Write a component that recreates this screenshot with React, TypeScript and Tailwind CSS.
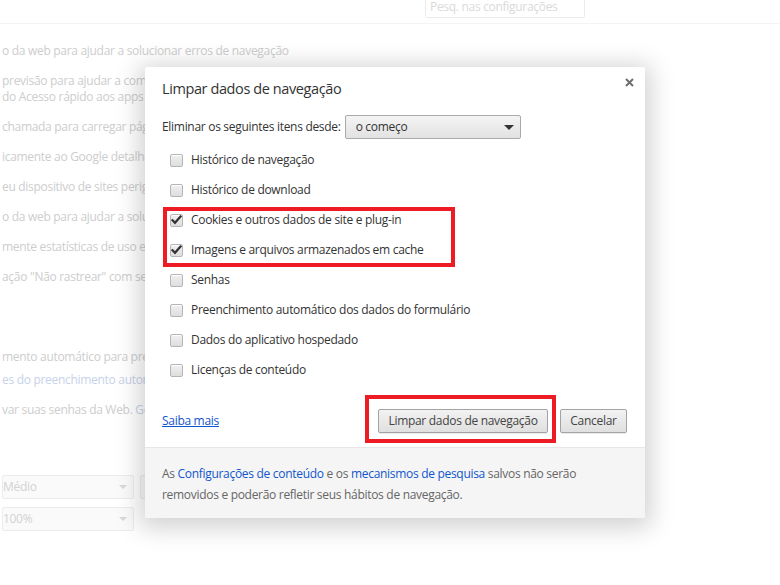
import React from "react";

const FONT = { fontFamily: '"Open Sans", "Noto Sans", Arial, sans-serif' };

const bgRows: { y: string; text: React.ReactNode }[] = [
  { y: "mt-[19px]", text: "o da web para ajudar a solucionar erros de navegação" },
  { y: "mt-[14px]", text: "previsão para ajudar a completar pesquisas e URLs digitados na barra" },
  { y: "mt-0", text: "do Acesso rápido aos apps" },
  { y: "mt-[14px]", text: "chamada para carregar páginas mais rapidamente" },
  { y: "mt-[14px]", text: "icamente ao Google detalhes de possíveis incidentes" },
  { y: "mt-[14px]", text: "eu dispositivo de sites perigosos" },
  { y: "mt-[14px]", text: "o da web para ajudar a solucionar erros de ortografia" },
  { y: "mt-[14px]", text: "mente estatísticas de uso e relatórios de erros" },
  { y: "mt-[14px]", text: "ação \"Não rastrear\" com seu tráfego de navegação" },
];

function Checkbox({ checked }: { checked?: boolean }) {
  return (
    <span className="flex h-[13px] w-[13px] shrink-0 items-center justify-center rounded-[2px] border border-[#b5b5b5] bg-gradient-to-b from-[#f0f0f0] to-[#dedede] shadow-[inset_0_1px_0_#fff]">
      {checked && (
        <svg width="11" height="10" viewBox="0 0 11 10">
          <path d="M1.5 5.2 L4 7.8 L9.5 1.5" fill="none" stroke="#333" strokeWidth="2.2" strokeLinecap="square" />
        </svg>
      )}
    </span>
  );
}

const items: { label: string; checked?: boolean }[] = [
  { label: "Histórico de navegação" },
  { label: "Histórico de download" },
  { label: "Cookies e outros dados de site e plug-in", checked: true },
  { label: "Imagens e arquivos armazenados em cache", checked: true },
  { label: "Senhas" },
  { label: "Preenchimento automático dos dados do formulário" },
  { label: "Dados do aplicativo hospedado" },
  { label: "Licenças de conteúdo" },
];

function ChromeButton({ children, className }: { children: React.ReactNode; className?: string }) {
  return (
    <button
      className={`h-[24px] rounded-[2px] border border-[#a3a3a3] bg-gradient-to-b from-[#f2f2f2] to-[#e0e0e0] text-[12px] text-[#444] shadow-[0_1px_0_rgba(0,0,0,0.08)] ${className ?? ""}`}
    >
      {children}
    </button>
  );
}

export default function App() {
  return (
    <div className="relative h-[585px] w-[780px] overflow-hidden bg-white text-[12px] tracking-[-0.3px]" style={FONT}>
      {/* faded settings page behind the overlay */}
      <div className="flex h-[24px] items-start border-b border-[#f3f3f3]">
        <div className="ml-[425px] h-[18px] w-[160px] rounded-b-[2px] border border-t-0 border-[#ececec] px-[4px] text-[12px] leading-[14px] text-[#dadada]">
          Pesq. nas configurações
        </div>
      </div>
      <div className="pl-[2px] text-[12px] leading-[16px] text-[#cdcdcd]">
        {bgRows.map((r, i) => (
          <div key={i} className={`whitespace-nowrap ${r.y}`}>
            {r.text}
          </div>
        ))}
        <div className="mt-[64px] whitespace-nowrap">mento automático para preencher formulários da Web</div>
        <div className="mt-[7px] whitespace-nowrap text-[#c7d2ea]">es do preenchimento automático</div>
        <div className="mt-[14px] whitespace-nowrap">
          var suas senhas da Web. <span className="text-[#c7d2ea]">Gerenciar senhas</span>
        </div>
        <div className="mt-[57px] flex gap-[6px]">
          <div className="flex h-[24px] w-[132px] items-center justify-between rounded-[2px] border border-[#ececec] bg-[#fafafa] pr-[6px] text-[#d2d2d2]">
            <span>Médio</span>
            <span className="h-0 w-0 border-x-[4px] border-t-[4px] border-x-transparent border-t-[#d8d8d8]" />
          </div>
          <div className="h-[24px] w-[60px] rounded-[2px] border border-[#ececec] bg-[#fafafa]" />
        </div>
        <div className="mt-[8px] flex h-[24px] w-[132px] items-center justify-between rounded-[2px] border border-[#ececec] bg-[#fafafa] pr-[6px] text-[#d2d2d2]">
          <span>100%</span>
          <span className="h-0 w-0 border-x-[4px] border-t-[4px] border-x-transparent border-t-[#d8d8d8]" />
        </div>
      </div>

      {/* dialog */}
      <div className="absolute left-[145px] top-[67px] flex w-[500px] flex-col rounded-[2px] bg-white shadow-[0_4px_24px_6px_rgba(0,0,0,0.18)]">
        <button className="absolute right-[9px] top-[8px] flex h-[14px] w-[14px] items-center justify-center">
          <svg width="9" height="9" viewBox="0 0 9 9">
            <path d="M1 1 L8 8 M8 1 L1 8" stroke="#6e6e6e" strokeWidth="2" />
          </svg>
        </button>
        <div className="px-[17px] pt-[12px]">
          <div className="text-[14.5px] leading-[20px] tracking-[-0.4px] text-[#333]">Limpar dados de navegação</div>
          <div className="mt-[16px] flex items-center gap-[4px] text-[#333]">
            <span>Eliminar os seguintes itens desde:</span>
            <div className="flex h-[24px] w-[176px] items-center justify-between rounded-[2px] border border-[#aaa] bg-gradient-to-b from-[#f4f4f4] to-[#e2e2e2] pl-[10px] pr-[6px]">
              <span>o começo</span>
              <span className="h-0 w-0 border-x-[5px] border-t-[5px] border-x-transparent border-t-[#333]" />
            </div>
          </div>
          <div className="mt-[6px]">
            {items.map((it) => (
              <label key={it.label} className="flex h-[30px] items-center gap-[8px] pl-[8px] text-[#333]">
                <Checkbox checked={it.checked} />
                <span>{it.label}</span>
              </label>
            ))}
          </div>
          <div className="mt-[24px] flex items-center justify-between pb-[14px]">
            <a className="text-[#15c] underline">Saiba mais</a>
            <div className="flex items-center gap-[12px] pr-[1px]">
              <ChromeButton className="w-[170px]">Limpar dados de navegação</ChromeButton>
              <ChromeButton className="w-[67px]">Cancelar</ChromeButton>
            </div>
          </div>
        </div>
        <div className="border-t border-[#e7e7e7] bg-[#f5f5f5] px-[17px] pb-[13px] pt-[15px] leading-[21px] text-[#666]">
          As <span className="text-[#15c]">Configurações de conteúdo</span> e os{" "}
          <span className="text-[#15c]">mecanismos de pesquisa</span> salvos não serão removidos e poderão refletir seus
          hábitos de navegação.
        </div>
        {/* highlight boxes drawn over the dialog */}
        <div className="pointer-events-none absolute left-[18px] top-[140px] h-[60px] w-[292px] border-[4px] border-[#ed1c24]" />
        <div className="pointer-events-none absolute left-[220px] top-[328px] h-[48px] w-[191px] border-[4px] border-[#ed1c24]" />
      </div>
    </div>
  );
}
